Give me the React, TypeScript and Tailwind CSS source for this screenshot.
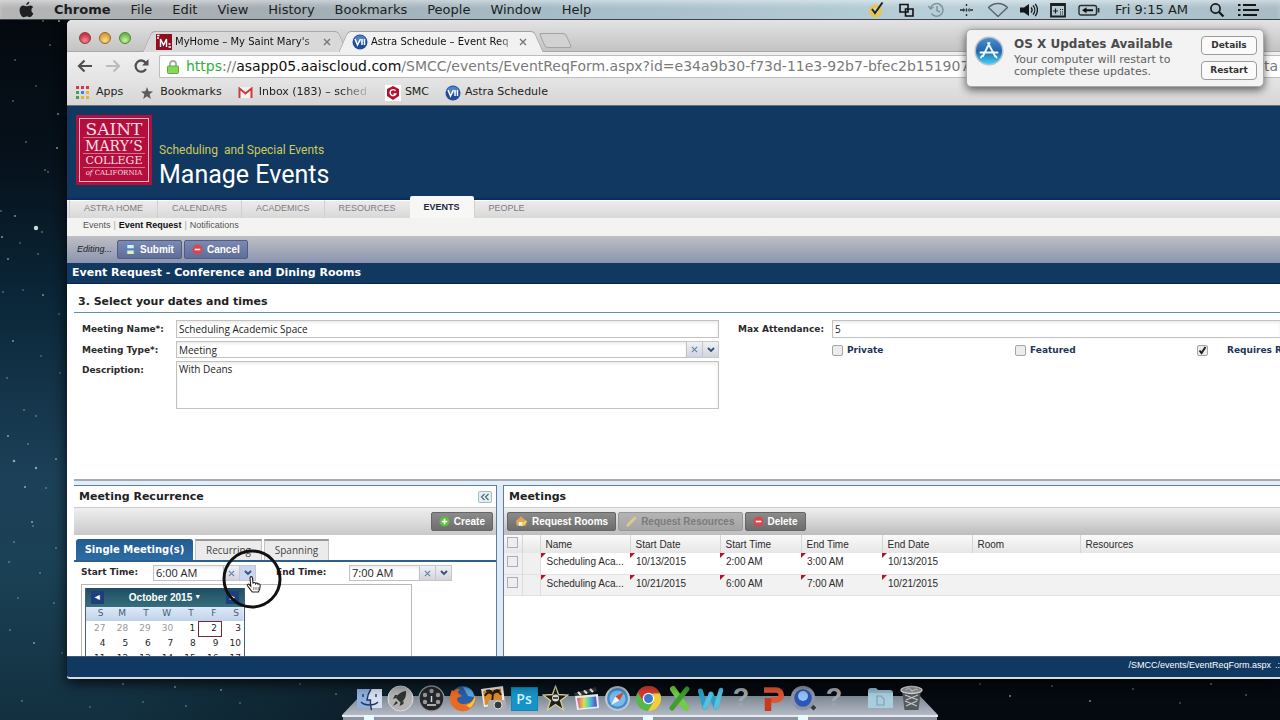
import React from "react";

const MENUS = ["File", "Edit", "View", "History", "Bookmarks", "People", "Window", "Help"];

const STARS: [number, number, number][] = [
  [43, 21, 0.8], [59, 21, 1.1], [50, 45, 0.8], [15, 60, 0.8], [36, 86, 0.7], [13, 101, 0.8], [58, 114, 0.9], [57, 148, 1],
  [26, 142, 0.8], [45, 170, 0.8], [48, 172, 0.8], [36, 228, 2.2], [1, 211, 0.8], [15, 216, 0.9], [42, 232, 0.8],
  [2, 237, 1], [20, 243, 0.7], [38, 254, 0.8], [8, 259, 0.9], [23, 290, 0.7], [3, 292, 0.8], [43, 295, 0.9],
  [59, 314, 0.7], [13, 341, 0.9], [41, 356, 0.7], [7, 378, 0.8], [60, 373, 0.7], [24, 410, 0.8], [36, 416, 0.8],
  [8, 436, 1], [28, 444, 0.8], [56, 459, 0.9], [14, 461, 1.3], [36, 468, 1.2], [25, 487, 1.1], [46, 488, 0.8],
  [32, 522, 1], [33, 526, 0.8], [14, 542, 0.8], [56, 548, 0.8], [9, 562, 0.8], [40, 573, 0.8], [18, 598, 0.7],
  [54, 603, 0.8], [10, 630, 0.8], [34, 643, 0.9], [62, 653, 0.7], [123, 684, 0.9], [175, 687, 0.9], [221, 690, 0.9],
  [143, 702, 0.7], [186, 706, 0.8], [22, 701, 0.8], [90, 707, 0.7], [240, 703, 0.7], [300, 684, 0.8], [336, 694, 0.8],
  [980, 684, 0.8], [1010, 696, 0.9], [1052, 686, 0.8], [1090, 701, 0.9], [1133, 689, 0.8], [1180, 703, 0.7],
  [1211, 684, 0.9], [1246, 695, 0.8],
];

function Sky() {
  return (
    <svg aria-hidden="true" className="absolute inset-0 h-full w-full">
      {STARS.map(([x, y, r]) => (
        <circle key={`${x}-${y}`} cx={x} cy={y} r={r} fill="#c9dbe2" opacity={r > 2 ? 1 : 0.65} />
      ))}
    </svg>
  );
}

function AppleIcon() {
  return (
    <svg viewBox="0 0 16 18" className="h-[17px] w-[15px]" fill="#1d1f20">
      <path d="M11 0.6c.1 1.9-1.5 3.6-3.3 3.6C7.400 2.500 9.200.7 11 .6zM15.300 13.100c-.8 2.100-2.200 4.200-3.800 4.200-1.200 0-1.600-.7-3.100-.7-1.500 0-2 .7-3.100.7C3 17.300.6 13.300.6 9.700c0-3.200 2-5 4.100-5 1.400 0 2.500.9 3.500.9.9 0 2.200-1 4-1 1 .1 2.200.5 3 1.700-2.900 1.800-2.400 5.600.1 6.800z" />
    </svg>
  );
}

function MenuBar() {
  return (
    <header className="relative z-20 flex h-5 shrink-0 items-center justify-between border-b border-[#3d444a] bg-[linear-gradient(90deg,#b5b5b5,#a3adb3_22%,#a6bdc9_45%,#b8d0da_75%,#a9bcc6)] pr-[21px] pl-[19px] font-['DejaVu_Sans',sans-serif] text-[13px] text-[#1c1e20] shadow-[inset_0_5px_6px_-2px_rgba(255,255,255,0.5)]">
      <nav className="flex items-center gap-5">
        <AppleIcon />
        <b>Chrome</b>
        {MENUS.map((m) => (
          <span key={m}>{m}</span>
        ))}
      </nav>
      <div className="flex items-center gap-[11px]">
        <svg viewBox="0 0 18 18" className="h-[18px] w-[19px]">
          <circle cx="8" cy="10" r="6.500" fill="#e8c54b" />
          <circle cx="8" cy="10" r="3" fill="#cfd4c0" />
          <path d="M4.500 8l3 4L15 1.500" fill="none" stroke="#222" strokeWidth="2" />
        </svg>
        <svg viewBox="0 0 18 18" className="h-[18px] w-[19px]" fill="none" stroke="#111" strokeWidth="1.600">
          <path d="M2.500 3.500h8v7.500h-8zM8 8h7.500v7H8z" />
        </svg>
        <svg viewBox="0 0 18 18" className="h-[18px] w-[19px]" fill="none" stroke="#84939c" strokeWidth="1.500">
          <path d="M3.200 7A6.300 6.300 0 1 1 4 12.500M1 5l2.200 3L6 6M9.500 5v4.500l3 1.500" />
        </svg>
        <svg viewBox="0 0 18 18" className="h-[18px] w-[19px]" fill="#27292b">
          <path d="M8.300 7.500h1.400v3H8.300zM8.300 3h1.400v2H8.300zM8.300 13h1.400v2H8.300zM2.500 8.300h4v1.400h-4zM11.500 8.300h4v1.400h-4zM6 6.500L7.500 9 6 11.500zM12 6.500L10.500 9l1.500 2.500z" />
        </svg>
        <svg viewBox="0 0 22 18" className="h-[18px] w-[22px]" fill="none" stroke="#59656c" strokeWidth="1.400">
          <path d="M1.500 6.500C7 1.200 15 1.200 20.500 6.500L11 15.500z" strokeLinejoin="round" />
        </svg>
        <svg viewBox="0 0 18 18" className="h-[18px] w-[18px]" fill="#151617">
          <path d="M0 6.500h4L9 3v12l-5-3.500H0z" />
          <path d="M11 6.500c1.300 1.500 1.300 3.500 0 5M13 4.500c2.400 2.600 2.400 6.400 0 9M15.200 2.800c3 3.500 3 8.900 0 12.400" fill="none" stroke="#151617" strokeWidth="1.300" />
        </svg>
        <svg viewBox="0 0 18 18" className="h-[18px] w-[18px]">
          <path d="M2 3h14v12.500H2z" fill="none" stroke="#1c1e20" strokeWidth="1.800" />
          <path d="M2 3h14v2H2z" fill="#1c1e20" />
          <path d="M4 10h5M6.500 7.500v5M11 8.500h1M13 8.500h1M11 11h1M13 11h1M11 13h1M13 13h1" stroke="#1c1e20" strokeWidth="1.200" />
        </svg>
        <svg viewBox="0 0 22 18" className="h-[18px] w-[22px]">
          <rect x="1" y="4.500" width="17.500" height="9.500" rx="2" fill="none" stroke="#2b2e30" strokeWidth="1.400" />
          <path d="M20.500 7v4.500" stroke="#2b2e30" strokeWidth="1.800" />
          <path d="M4 9.300l4.500-3v2H15v2H8.500v2z" fill="#111" />
        </svg>
        <span className="mr-[5px] ml-1 whitespace-nowrap">Fri 9:15 AM</span>
        <svg viewBox="0 0 18 18" className="ml-1 h-[18px] w-[18px]" fill="none" stroke="#17191a">
          <circle cx="7.500" cy="7.500" r="4.600" strokeWidth="1.700" />
          <path d="M11 11l4.500 4.500" strokeWidth="2.300" />
        </svg>
        <svg viewBox="0 0 22 18" className="h-[18px] w-[22px]" stroke="#151617" strokeWidth="2.200">
          <path d="M1 4h2.500M1 9h2.500M1 14h2.500M6 4h13M6 9h16M6 14h14" />
        </svg>
      </div>
    </header>
  );
}

function Notification() {
  return (
    <aside className="absolute top-[29px] right-4 z-30 flex gap-[10px] rounded-[5px] border border-[#a9a9a9] bg-[#f3f3f3] py-[6px] pr-[6px] pl-[7px] font-['DejaVu_Sans',sans-serif] shadow-[0_3px_9px_rgba(0,0,0,0.6)]">
      <svg viewBox="0 0 30 30" className="h-[30px] w-[30px]">
        <defs>
          <linearGradient id="store" x1="0" x2="0" y1="0" y2="1">
            <stop offset="0" stopColor="#4d8fd0" />
            <stop offset="0.5" stopColor="#2265ad" />
            <stop offset="1" stopColor="#3fd0f5" />
          </linearGradient>
        </defs>
        <circle cx="15" cy="15" r="14.500" fill="#b9c0c6" />
        <circle cx="15" cy="15" r="13" fill="url(#store)" />
        <path d="M15.500 7L9 20M14 7l7 13M6.500 16.500h17M8 20l-1 1.500M21.500 20l1 1.500" stroke="#eef6fb" strokeWidth="1.900" strokeLinecap="round" />
      </svg>
      <div className="w-[177px] text-[11px] leading-[12px] text-[#5f5f5f]">
        <b className="mt-[1px] mb-[3px] block text-[12px] leading-[14px] whitespace-nowrap text-[#4b4b4b]">OS X Updates Available</b>
        <p>
          Your computer will restart to
          <br />
          complete these updates.
        </p>
      </div>
      <div className="flex flex-col gap-[6px] text-[9px] font-bold text-[#333]">
        <button className="h-[19px] w-[56px] rounded-[4px] border border-[#9b9b9b] bg-[#fafafa]">Details</button>
        <button className="h-[19px] w-[56px] rounded-[4px] border border-[#9b9b9b] bg-[#fafafa]">Restart</button>
      </div>
    </aside>
  );
}

function AstraIcon() {
  return (
    <svg viewBox="0 0 16 16" className="h-4 w-4 shrink-0">
      <circle cx="8" cy="8" r="7.500" fill="#1f4f9c" />
      <ellipse cx="8" cy="5" rx="5.500" ry="3.500" fill="#6fa3dc" opacity="0.6" />
      <path d="M3 5l2.500 6L8.500 5M10 5v6M12.500 5v6" fill="none" stroke="#fff" strokeWidth="1.500" />
    </svg>
  );
}

function Tab({ title, icon, active }: { title: string; icon: React.ReactNode; active?: boolean }) {
  const face = active ? "bg-[#f1f1f1] border-[#a2a2a2]" : "bg-[#d9d9d9] border-[#a9a9a9]";
  return (
    <div className={`relative flex h-[21px] w-[196px] items-center gap-[3px] pr-3 pl-[9px] ${active ? "z-10" : ""}`}>
      <span className={`absolute inset-y-0 left-0 w-1/2 -skew-x-[24deg] rounded-tl-[4px] border-t border-l ${face}`} />
      <span className={`absolute inset-y-0 right-0 w-1/2 skew-x-[24deg] rounded-tr-[4px] border-t border-r ${face}`} />
      <span className={`absolute inset-x-6 inset-y-0 border-t ${face}`} />
      <span className="relative">{icon}</span>
      <span className="relative flex-1 overflow-hidden text-[10px] whitespace-nowrap text-[#111] [mask-image:linear-gradient(90deg,#000_88%,transparent)]">{title}</span>
      <button aria-label="Close tab" className="relative">
        <svg viewBox="0 0 8 8" className="h-[8px] w-[8px]" stroke="#777" strokeWidth="1.400">
          <path d="M1 1l6 6M7 1L1 7" />
        </svg>
      </button>
    </div>
  );
}

function BrowserChrome() {
  return (
    <div className="font-['DejaVu_Sans',sans-serif]">
      <div className="flex h-8 items-end bg-gradient-to-b from-[#e3e3e3] to-[#c2c2c2] pl-3 shadow-[inset_0_-1px_0_#a8a8a8]">
        <div className="flex h-full items-center gap-2 pt-1">
          <i className="h-3 w-3 rounded-full border border-[#8c3a40] bg-[radial-gradient(circle_at_50%_75%,#f08a92,#cf2f42_70%)]" />
          <i className="h-3 w-3 rounded-full border border-[#8f6a2c] bg-[radial-gradient(circle_at_50%_75%,#f8dd92,#dc9c34_70%)]" />
          <i className="h-3 w-3 rounded-full border border-[#4f8438] bg-[radial-gradient(circle_at_50%_75%,#c9f2a4,#6cb843_70%)]" />
        </div>
        <div className="ml-4 flex">
          <Tab
            title="MyHome – My Saint Mary's"
            icon={
              <svg viewBox="0 0 16 16" className="h-4 w-4">
                <path d="M0 0h16v16H0z" fill="#8e1020" />
                <path d="M4.500 13V5l3 6 3-6v8M1 1.500h2.500M1 4h2M12.500 10h2M12.500 13h2.500" fill="none" stroke="#fff" strokeWidth="1.400" />
              </svg>
            }
          />
          <Tab title="Astra Schedule – Event Req" icon={<AstraIcon />} active />
        </div>
        <button aria-label="New tab" className="mb-[4px] ml-[3px] h-[15px] w-[27px] skew-x-[24deg] rounded-[3px] border border-[#a3a3a3] bg-[#d2d2d2]" />
      </div>

      <div className="flex h-7 items-center bg-gradient-to-b from-[#f0f0f0] to-[#e4e4e4] pl-[10px]">
        <div className="flex items-center gap-3 text-[#555]">
          <button aria-label="Back">
            <svg viewBox="0 0 16 14" className="h-[14px] w-4" fill="none" stroke="#505050" strokeWidth="2.200">
              <path d="M15 7H2M7.500 1.500L2 7l5.500 5.500" />
            </svg>
          </button>
          <button aria-label="Forward">
            <svg viewBox="0 0 16 14" className="h-[14px] w-4" fill="none" stroke="#bcbcbc" strokeWidth="2.200">
              <path d="M1 7h13M8.500 1.500L14 7l-5.500 5.500" />
            </svg>
          </button>
          <button aria-label="Reload">
            <svg viewBox="0 0 16 16" className="h-4 w-4">
              <path d="M13 11A5.600 5.600 0 1 1 12.500 4.500" fill="none" stroke="#505050" strokeWidth="2.300" />
              <path d="M15.500 1v6.500H9z" fill="#505050" />
            </svg>
          </button>
        </div>
        <div className="mt-px ml-[10px] flex h-[23px] min-w-0 flex-1 items-center overflow-hidden rounded-l-[2px] border border-r-0 border-[#bdbdbd] bg-white pl-[7px] text-[14px] whitespace-nowrap text-[#7a7a7a]">
          <svg viewBox="0 0 12 14" className="mr-[7px] h-[14px] w-3 shrink-0">
            <path d="M3 7V4a3 3 0 0 1 6 0v3" fill="none" stroke="#a5aaa2" strokeWidth="1.800" />
            <rect x="0.500" y="6" width="11" height="7.500" rx="1" fill="#86d65c" stroke="#5cab38" />
          </svg>
          <span>
            <span className="text-[#2eb13c]">https</span>://<span className="text-[#111]">asapp05.aaiscloud.com</span>
            /SMCC/events/EventReqForm.aspx?id=e34a9b30-f73d-11e3-92b7-bfec2b151907
          </span>
          <span className="ml-auto pr-[2px]">ta</span>
        </div>
      </div>

      <div className="flex h-[26px] items-center border-b border-[#6e6e6e] bg-gradient-to-b from-[#e4e4e4] to-[#d6d6d6] pl-[9px] text-[11px] text-[#222]">
        <a href="#apps" className="flex items-center gap-[7px]">
          <svg viewBox="0 0 13 13" className="h-[13px] w-[13px]">
            <path d="M0 0h3v3H0zM5 0h3v3H5zM10 0h3v3h-3z" fill="#d9344a" />
            <path d="M0 5h3v3H0z" fill="#3da35a" />
            <path d="M5 5h3v3H5z" fill="#3f7fe0" />
            <path d="M10 5h3v3h-3zM10 10h3v3h-3zM5 10h3v3H5z" fill="#e8b13a" />
            <path d="M0 10h3v3H0z" fill="#3da35a" />
          </svg>
          Apps
        </a>
        <a href="#bookmarks" className="ml-[18px] flex items-center gap-[7px]">
          <svg viewBox="0 0 12 12" className="h-3 w-3" fill="#5c5c5c">
            <path d="M6 0l1.600 4.200L12 4.500 8.600 7.300 9.800 12 6 9.300 2.200 12l1.200-4.700L0 4.500l4.400-.3z" />
          </svg>
          Bookmarks
        </a>
        <a href="#inbox" className="ml-4 flex items-center gap-[6px] whitespace-nowrap">
          <svg viewBox="0 0 15 11" className="h-[11px] w-[15px] shrink-0">
            <path d="M1 0h13v11H1z" fill="#f2f2f2" />
            <path d="M1.500 11V1.500l6 5 6-5V11" fill="none" stroke="#cf3b3b" strokeWidth="2" />
          </svg>
          <span className="[mask-image:linear-gradient(90deg,#000_75%,rgba(0,0,0,0.2))]">Inbox (183) – sched</span>
        </a>
        <a href="#smc" className="ml-[18px] flex items-center gap-1">
          <svg viewBox="0 0 16 16" className="h-4 w-4">
            <path d="M0 0h16v16H0z" fill="#fff" />
            <path d="M8 1l6 3v7l-6 4-6-4V4z" fill="#b5122f" />
            <path d="M10.500 5.800A3 3 0 1 0 10.800 9H8.500" fill="none" stroke="#fff" strokeWidth="1.400" />
          </svg>
          SMC
        </a>
        <a href="#astra" className="ml-4 flex items-center gap-1">
          <AstraIcon />
          Astra Schedule
        </a>
      </div>
    </div>
  );
}

function Banner() {
  return (
    <div className="flex h-[94px] items-start gap-[7px] bg-[#103861] pt-[9px] pl-[9px] shadow-[inset_0_-3px_2px_-1px_#0a2c66]">
      <div className="bg-[#b40f3c] p-[3px]">
        <div className="flex h-[64px] w-[70px] flex-col items-center justify-between border border-[#f0b8c6] px-[3px] pt-[3px] pb-[3px] font-['DejaVu_Serif',serif] text-[#fbdfe6]">
          <span className="w-full border-b border-[#d9708a] text-center text-[17px] leading-[15px]">SAINT</span>
          <span className="w-full border-b border-[#d9708a] text-center text-[14px] leading-[14px]">MARY’S</span>
          <span className="w-full border-b border-[#d9708a] text-center text-[11px] leading-[13px]">COLLEGE</span>
          <span className="text-[7px] leading-[9px] whitespace-nowrap">
            <i>of</i> CALIFORNIA
          </span>
        </div>
      </div>
      <div className="pt-[27px] font-['Roboto',sans-serif]">
        <p className="text-[12px] leading-4 whitespace-pre text-[#cfca5a]">Scheduling  and Special Events</p>
        <h1 className="text-[25px] leading-[33px] text-white">Manage Events</h1>
      </div>
    </div>
  );
}

const NAV = ["ASTRA HOME", "CALENDARS", "ACADEMICS", "RESOURCES", "EVENTS", "PEOPLE"];

function SiteNav() {
  return (
    <div className="font-['Liberation_Sans',sans-serif] text-[9px] text-[#7d7d7d]">
      <nav className="flex h-[18px] items-end border-t border-white bg-gradient-to-b from-[#eeeaea] to-[#d9d9d9] pl-[2px]">
        {NAV.map((n) =>
          n === "EVENTS" ? (
            <a key={n} href="#events" className="relative z-10 flex h-[22px] items-center rounded-t-[2px] bg-[#f7f7f6] px-[14px] pt-[2px] font-bold text-[#1d2a3a]">
              {n}
            </a>
          ) : (
            <a key={n} href="#nav" className="flex h-[18px] items-center border-l border-[#d0d0d0] px-[14px]">
              {n}
            </a>
          ),
        )}
      </nav>
      <div className="flex h-[18px] items-center gap-[3px] bg-[#f3f3f1] pb-[2px] pl-4 text-[#555]">
        <a href="#list">Events</a>
        <span className="text-[#aaa]">|</span>
        <a href="#request" className="font-bold text-[#111]">Event Request</a>
        <span className="text-[#aaa]">|</span>
        <a href="#notifications">Notifications</a>
      </div>
    </div>
  );
}

function MinusIcon() {
  return (
    <svg viewBox="0 0 12 12" className="h-[11px] w-[11px]">
      <circle cx="6" cy="6" r="5.500" fill="#d9464f" />
      <path d="M3 6h6" stroke="#fff" strokeWidth="1.800" />
    </svg>
  );
}

function ToolButton({ icon, label, tone }: { icon: React.ReactNode; label: string; tone: "blue" | "grey" | "off" }) {
  const look = {
    blue: "border-[#515c85] bg-gradient-to-b from-[#7c89b0] to-[#5f6d9a] text-white",
    grey: "border-[#666] bg-gradient-to-b from-[#8b8b8b] to-[#6d6d6d] text-white",
    off: "border-[#989898] bg-gradient-to-b from-[#b4b4b4] to-[#a4a4a4] text-[#7b7b7b]",
  }[tone];
  return (
    <button disabled={tone === "off"} className={`flex h-[19px] items-center gap-1 rounded-[2px] border px-[7px] font-['Liberation_Sans',sans-serif] text-[10px] font-bold whitespace-nowrap ${look}`}>
      {icon}
      {label}
    </button>
  );
}

function ComboButtons({ hot }: { hot?: boolean }) {
  return (
    <>
      <button aria-label="Clear" className="flex w-4 items-center justify-center border border-l-0 border-[#c6c6ce] bg-gradient-to-b from-[#f0f1f4] to-[#d2d4dc]">
        <svg viewBox="0 0 8 8" className="h-[7px] w-[7px]" stroke="#5c83ad" strokeWidth="1.300">
          <path d="M1 1l6 6M7 1L1 7" />
        </svg>
      </button>
      <button aria-label="Open list" className={`flex w-4 items-center justify-center border border-l-0 border-[#c6c6ce] ${hot ? "bg-[#c9d6ee]" : "bg-gradient-to-b from-[#f0f1f4] to-[#d2d4dc]"}`}>
        <svg viewBox="0 0 8 6" className="h-[6px] w-2" fill="none" stroke="#36507c" strokeWidth="1.800">
          <path d="M1 1l3 3 3-3" />
        </svg>
      </button>
    </>
  );
}

const FIELD = "border border-[#c2c2c2] bg-white px-[2px] font-['Open_Sans',sans-serif] font-normal text-[#222] shadow-[inset_0_2px_3px_rgba(0,0,0,0.08)] outline-none";
const LABEL = "w-[94px] shrink-0 pt-[3px] text-[9px] leading-3 font-bold whitespace-nowrap text-[#2a2a2a]";

function RequestForm() {
  return (
    <form className="grid grid-cols-[656fr_542fr] pt-[7px] pl-2 text-[10px]">
      <div className="space-y-[3px] pr-[19px]">
        <div className="flex">
          <label htmlFor="name" className={LABEL}>Meeting Name*:</label>
          <input id="name" defaultValue="Scheduling Academic Space" className={`h-[18px] min-w-0 flex-1 ${FIELD}`} />
        </div>
        <div className="flex">
          <label htmlFor="type" className={LABEL}>Meeting Type*:</label>
          <input id="type" defaultValue="Meeting" className={`h-[17px] min-w-0 flex-1 ${FIELD}`} />
          <ComboButtons />
        </div>
        <div className="flex">
          <label htmlFor="desc" className={LABEL}>Description:</label>
          <textarea id="desc" defaultValue="With Deans" className={`h-[48px] min-w-0 flex-1 resize-none ${FIELD}`} />
        </div>
      </div>
      <div className="space-y-[6px]">
        <div className="flex">
          <label htmlFor="max" className={LABEL}>Max Attendance:</label>
          <input id="max" defaultValue="5" className={`h-[18px] min-w-0 flex-1 border-r-0 ${FIELD}`} />
        </div>
        <div className="grid grid-cols-[183fr_182fr_83fr] pl-[94px] text-[9px] font-bold text-[#20355a]">
          <label className="flex items-center gap-1">
            <input type="checkbox" className="h-[11px] w-[11px] appearance-none rounded-[2px] border border-[#a5a5a5] bg-[#ececec]" />
            Private
          </label>
          <label className="flex items-center gap-1">
            <input type="checkbox" className="h-[11px] w-[11px] appearance-none rounded-[2px] border border-[#a5a5a5] bg-[#ececec]" />
            Featured
          </label>
          <label className="flex items-center gap-[19px] overflow-hidden whitespace-nowrap">
            <span className="relative flex">
              <input type="checkbox" defaultChecked className="h-[11px] w-[11px] appearance-none rounded-[2px] border border-[#a5a5a5] bg-[#ececec]" />
              <svg viewBox="0 0 11 11" className="pointer-events-none absolute inset-0" fill="none" stroke="#222" strokeWidth="2">
                <path d="M2.500 5.500l2 2.500L8.500 2" />
              </svg>
            </span>
            Requires Rooms
          </label>
        </div>
      </div>
    </form>
  );
}

const WEEKS = [
  [27, 28, 29, 30, 1, 2, 3],
  [4, 5, 6, 7, 8, 9, 10],
  [11, 12, 13, 14, 15, 16, 17],
];

function Calendar() {
  return (
    <div className="w-[160px] border-x border-[#44607a]">
      <div className="flex h-[19px] items-center justify-between bg-gradient-to-b from-[#1f4c63] to-[#356f7c] px-[5px] font-['Liberation_Sans',sans-serif] text-[10px] font-bold text-white">
        <button aria-label="Previous month" className="flex h-[13px] w-[13px] items-center justify-center bg-[#1d3f7c] text-[6px]">◀</button>
        <button className="flex items-center gap-[2px]">
          October 2015<span className="text-[7px]">▼</span>
        </button>
        <button aria-label="Next month" className="flex h-[13px] w-[13px] items-center justify-center bg-[#1d3f7c] text-[6px]">▶</button>
      </div>
      <table className="w-full table-fixed border-collapse font-['DejaVu_Sans',sans-serif] text-[9px] text-[#1f1f1f]">
        <thead className="bg-gradient-to-b from-[#dfe9f7] to-[#bfd2ea] text-[#4a5c77]">
          <tr>
            {"SMTWTFS".split("").map((d, i) => (
              <th key={i} className="h-[14px] p-0 pr-[5px] text-right font-normal">{d}</th>
            ))}
          </tr>
        </thead>
        <tbody>
          {WEEKS.map((w, r) => (
            <tr key={r}>
              {w.map((d) => {
                const other = r === 0 && d > 20;
                const today = r === 0 && d === 2;
                return (
                  <td key={d} className={`h-[15px] p-0 text-right leading-[13px] ${other ? "text-[#9a9a9a]" : ""} ${today ? "border border-[#7c2430] pr-1" : "pr-[3px]"}`}>
                    {d}
                  </td>
                );
              })}
            </tr>
          ))}
        </tbody>
      </table>
    </div>
  );
}

function PointerRing() {
  return (
    <span aria-hidden="true" className="pointer-events-none absolute -top-4 -right-[26px] z-20 h-[60px] w-[60px]">
      <svg viewBox="0 0 60 60" className="h-full w-full">
        <circle cx="30" cy="30" r="28" fill="none" stroke="#111" strokeWidth="3" />
        <path d="M28 29c0-1.800 2.300-1.800 2.500 0l.5 5.500c.5-1.400 2.400-1.200 2.600.2.600-1 2.300-.8 2.400.5.800-.7 2.200-.2 2.200 1.200 0 3-.6 4.600-1.800 6.600h-6.200c-1.500-2-3.200-4.200-4.700-6.200-.7-1.200.8-2.300 1.800-1.300l1.500 1.600z" fill="#fff" stroke="#222" strokeWidth="1.100" />
        <path d="M31.800 38v3M34 38v3M36.200 38v3" stroke="#333" strokeWidth="0.700" />
      </svg>
    </span>
  );
}

function RecurrencePanel() {
  return (
    <section className="flex min-h-0 min-w-0 flex-col border-t border-r border-[#5b7f9f] bg-white">
      <div className="flex h-[21px] shrink-0 items-center justify-between pt-px pr-1 pl-[5px]">
        <h3 className="text-[11px] font-bold text-[#222]">Meeting Recurrence</h3>
        <button aria-label="Collapse panel" className="flex h-3 w-[14px] items-center justify-center rounded-[2px] border border-[#9fbcc8] bg-[#e4eff2]">
          <svg viewBox="0 0 10 8" className="h-2 w-[10px]" fill="none" stroke="#46697a" strokeWidth="1.200">
            <path d="M4.500 1l-3 3 3 3M8.500 1l-3 3 3 3" />
          </svg>
        </button>
      </div>
      <div className="flex h-[28px] shrink-0 items-center justify-end border-t border-[#ccc] bg-gradient-to-b from-[#efefef] to-[#c9c9c9] pr-[3px]">
        <ToolButton
          tone="grey"
          label="Create"
          icon={
            <svg viewBox="0 0 12 12" className="h-[11px] w-[11px]">
              <circle cx="6" cy="6" r="5.500" fill="#5fbf45" />
              <path d="M3 6h6M6 3v6" stroke="#fff" strokeWidth="1.800" />
            </svg>
          }
        />
      </div>
      <div className="flex shrink-0 items-end gap-[2px] border-b-2 border-[#2d5f8c] pt-[4px] pl-[2px] text-[10px] text-[#444]" role="tablist">
        <button role="tab" className="h-[21px] w-[117px] rounded-t-[3px] bg-gradient-to-b from-[#245a92] to-[#2c6ca3] font-bold text-white">Single Meeting(s)</button>
        <button role="tab" className="h-[21px] w-[67px] border border-t-2 border-b-0 border-[#c4c4c4] border-t-[#999] bg-[#ebebeb] font-['Open_Sans',sans-serif]">Recurring</button>
        <button role="tab" className="h-[21px] w-[65px] border border-t-2 border-b-0 border-[#c4c4c4] border-t-[#999] bg-[#ebebeb] font-['Open_Sans',sans-serif]">Spanning</button>
      </div>
      <div className="flex h-[22px] shrink-0 pt-[3px] pl-[7px] text-[9px] font-bold text-[#2a2a2a]">
        <label htmlFor="start" className="w-[72px] pt-px">Start Time:</label>
        <div className="relative flex h-4 text-[11px]">
          <input id="start" defaultValue="6:00 AM" className={`w-[71px] ${FIELD}`} />
          <ComboButtons hot />
          <PointerRing />
        </div>
        <label htmlFor="end" className="ml-5 w-[73px] pt-px">End Time:</label>
        <div className="flex h-4 text-[11px]">
          <input id="end" defaultValue="7:00 AM" className={`w-[71px] ${FIELD}`} />
          <ComboButtons />
        </div>
      </div>
      <div className="ml-[7px] min-h-0 w-[331px] flex-1 overflow-hidden border border-b-0 border-[#b9b9b9] pt-[3px] pl-[3px]">
        <Calendar />
      </div>
    </section>
  );
}

const COLUMNS = ["Name", "Start Date", "Start Time", "End Time", "End Date", "Room", "Resources"];
const ROWS = [
  ["Scheduling Aca...", "10/13/2015", "2:00 AM", "3:00 AM", "10/13/2015", "", ""],
  ["Scheduling Aca...", "10/21/2015", "6:00 AM", "7:00 AM", "10/21/2015", "", ""],
];

function MeetingsPanel() {
  return (
    <section className="min-h-0 min-w-0 border-t border-l border-[#5b7f9f] bg-white">
      <h3 className="flex h-[21px] items-center pt-px pl-[5px] text-[11px] font-bold text-[#222]">Meetings</h3>
      <div className="flex h-[28px] items-center gap-[2px] border-t border-[#ccc] bg-gradient-to-b from-[#efefef] to-[#bdbdbd] pb-px pl-[3px]">
        <ToolButton
          tone="grey"
          label="Request Rooms"
          icon={
            <svg viewBox="0 0 14 12" className="h-3 w-[13px]">
              <path d="M1 6l5.500-5L12 6v5H2z" fill="#e6a253" />
              <path d="M4 7h4v4H4z" fill="#fff" />
              <path d="M7 11l5.500-5" stroke="#e9d75c" strokeWidth="2.200" />
            </svg>
          }
        />
        <ToolButton
          tone="off"
          label="Request Resources"
          icon={
            <svg viewBox="0 0 12 12" className="h-[11px] w-[11px]">
              <path d="M2 10l7.500-7.500" stroke="#dccb82" strokeWidth="3.200" strokeLinecap="round" />
            </svg>
          }
        />
        <ToolButton tone="grey" label="Delete" icon={<MinusIcon />} />
      </div>
      <table className="w-full table-fixed border-collapse font-['Liberation_Sans',sans-serif] text-[10px] text-[#2b2b2b]">
        <colgroup>
          <col className="w-[18px]" />
          <col className="w-[18px]" />
          <col className="w-[90px]" />
          <col className="w-[90px]" />
          <col className="w-[81px]" />
          <col className="w-[81px]" />
          <col className="w-[90px]" />
          <col className="w-[108px]" />
          <col />
        </colgroup>
        <thead className="bg-gradient-to-b from-[#fafafa] to-[#e6e6e6]">
          <tr>
            <th className="h-[18px] p-0">
              <input type="checkbox" aria-label="Select all" className="mx-auto mb-1 block h-[11px] w-[11px] appearance-none border border-[#a9aeb8] bg-[#eceef1]" />
            </th>
            <th className="border-l border-[#d5d5d5] p-0" />
            {COLUMNS.map((c) => (
              <th key={c} className="border-l border-[#d5d5d5] p-0 pl-[5px] text-left font-normal">{c}</th>
            ))}
          </tr>
        </thead>
        <tbody>
          {ROWS.map((row, r) => (
            <tr key={r} className={`border-b border-[#e2e2e2] ${r ? "bg-[#f2f2f2]" : ""}`}>
              <td className="h-[21px] bg-[#f0f0f0] p-0">
                <input type="checkbox" aria-label="Select meeting" className="mx-auto mb-1 block h-[11px] w-[11px] appearance-none border border-[#a9aeb8] bg-[#eceef1]" />
              </td>
              <td className="border-x border-[#dcdcdc] bg-[#f0f0f0] p-0" />
              {row.map((v, i) => (
                <td key={i} className="relative p-0 pb-[3px] pl-[6px] whitespace-nowrap">
                  {v && <span className="absolute top-0 left-0 border-t-[5px] border-r-[5px] border-t-[#b3112c] border-r-transparent" />}
                  {v}
                </td>
              ))}
            </tr>
          ))}
        </tbody>
      </table>
    </section>
  );
}

function BrowserWindow() {
  return (
    <main className="relative z-10 ml-[67px] flex min-h-0 flex-1 flex-col overflow-hidden rounded-tl-[5px] rounded-bl-[3px] border-b-2 border-[#d6dbe2] bg-white font-['DejaVu_Sans',sans-serif] shadow-[0_4px_14px_rgba(0,0,0,0.8)]">
      <BrowserChrome />
      <Banner />
      <SiteNav />
      <div className="flex h-[27px] shrink-0 items-center gap-[2px] bg-gradient-to-b from-[#bfc0c4] to-[#8b94b0] pl-[10px]">
        <i className="mr-[3px] font-['Liberation_Sans',sans-serif] text-[9px] text-[#222]">Editing...</i>
        <ToolButton
          tone="blue"
          label="Submit"
          icon={
            <svg viewBox="0 0 12 12" className="h-[11px] w-[11px]">
              <path d="M1 1h10v10H1z" fill="#4a86cf" />
              <path d="M2.500 1h7v3.500h-7z" fill="#dcecf8" />
              <path d="M2.500 7h7v4h-7z" fill="#e6efb0" />
            </svg>
          }
        />
        <ToolButton tone="blue" label="Cancel" icon={<MinusIcon />} />
      </div>
      <h2 className="flex h-[21px] shrink-0 items-center border-b border-[#0a2650] bg-[#103861] pt-px pl-[5px] text-[11px] font-bold text-white">Event Request - Conference and Dining Rooms</h2>
      <div className="flex min-h-0 flex-1 flex-col pl-[7px]">
        <h3 className="flex h-[29px] shrink-0 items-end border-b border-[#5f92b4] pb-[2px] pl-1 text-[11px] font-bold text-[#222]">3. Select your dates and times</h3>
        <RequestForm />
        <div className="mt-auto h-[6px] shrink-0 border-t-2 border-[#a3adba] bg-[#e3eef6]" />
        <div className="grid h-[171px] shrink-0 grid-cols-[423fr_6px_777fr] bg-[#dfeaf5]">
          <RecurrencePanel />
          <div />
          <MeetingsPanel />
        </div>
      </div>
      <footer className="flex h-[21px] shrink-0 items-center justify-end gap-1 border-t border-[#3b5878] bg-[#103861] pb-[2px] font-['Liberation_Sans',sans-serif] text-[9px] text-white">
        /SMCC/events/EventReqForm.aspx <span>.:</span>
      </footer>
    </main>
  );
}

const ICON = "h-[27px] w-[27px] shrink-0";

function Dock() {
  const letter = "flex h-[27px] w-[27px] shrink-0 items-center justify-center font-['Liberation_Sans',sans-serif] text-[27px] leading-none font-bold";
  return (
    <footer className="relative flex h-[41px] shrink-0 items-start justify-center pt-[7px]">
      <svg aria-hidden="true" viewBox="0 0 596 24" preserveAspectRatio="none" className="absolute bottom-0 h-[24px] w-[596px]">
        <defs>
          <linearGradient id="shelf" x1="0" x2="0" y1="0" y2="1">
            <stop offset="0" stopColor="#7b8792" />
            <stop offset="1" stopColor="#b4bac6" />
          </linearGradient>
        </defs>
        <path d="M18 0h560l18 19H0z" fill="url(#shelf)" />
        <path d="M0 19h596v2H0z" fill="#e6e9ee" />
        <path d="M1 21h594v3H1z" fill="#8d95a2" />
        <path d="M22 19h10v5H22zM301 19h10v5H301zM456 19h10v5H456z" fill="#e9fbff" />
      </svg>
      <div className="relative mt-[-1px] flex items-center gap-1">
        <svg viewBox="0 0 27 27" className={ICON}>
          <path d="M1 4h25v19H1z" fill="#8fb0e0" />
          <path d="M15 4h11v19H14c0-4 0-6 .3-8H11c.5-4 2-8 4-11z" fill="#d5e1f2" />
          <path d="M15 4c-2 3-3.500 7-4 11h3.500c-.4 3 0 6 1 10M7 9v3M20 9v3M5 17c4 4 13 4 17 0" fill="none" stroke="#23355c" strokeWidth="1.400" />
        </svg>
        <svg viewBox="0 0 27 27" className={ICON}>
          <circle cx="13.500" cy="13.500" r="12.500" fill="#b3b3b3" stroke="#dedede" />
          <path d="M19 6c-5 .5-8 3-10 7l4.500 4.500c4-2 6-5.500 5.500-11.500zM9 13l-3 1 2-4h3zM13.500 17.500l-1 3.500 4-2v-3zM9 16l-3 5 5-3z" fill="#333" />
        </svg>
        <svg viewBox="0 0 27 27" className={ICON}>
          <circle cx="13.500" cy="13.500" r="12.500" fill="#25282c" stroke="#9b9b9b" strokeWidth="1.300" />
          {[[13.5, 6], [20, 10], [20, 17], [7, 17], [7, 10]].map(([x, y]) => (
            <circle key={`${x}${y}`} cx={x} cy={y} r="2.200" fill="#999" />
          ))}
          <path d="M13.500 11v6M9 20h9" stroke="#d8d8d8" strokeWidth="1.500" />
        </svg>
        <svg viewBox="0 0 27 27" className={ICON}>
          <circle cx="14" cy="12.500" r="11.500" fill="#275faa" />
          <path d="M14 2c6 0 11 4 11 10l-6-1z" fill="#5ca5e0" />
          <path d="M3 5c-3 6-3 12 1 17 5 5 13 6 18 1 5-4 5-9 4-13-1 5-5 9-11 9-4 0-7-2-7-6l5-2-4-3c0-2 1-3 2-4-3 0-4 0-6 2z" fill="#ea6a20" />
          <path d="M21 23c5-4 5.500-9 5-13-1 5-4 9-9 10z" fill="#f6c63a" />
        </svg>
        <svg viewBox="0 0 27 27" className={ICON}>
          <path d="M1 4l22-3 2 18-21 3z" fill="#f2efe8" />
          <path d="M3 6l18-2.500 1.500 14L5 20z" fill="#d98b25" />
          <path d="M13 8l-1 10M12 9c-3-3-6-1-7 2M13 9c3-4 7-2 8 1M12 8c-1-3-4-3-6-2M13 8c2-4 5-3 7-2" stroke="#2b1a0a" strokeWidth="1.900" fill="none" />
          <rect x="8" y="15" width="18" height="10" rx="2" fill="#a9acb0" />
          <circle cx="18" cy="20" r="4" fill="#333a42" stroke="#ddd" />
        </svg>
        <span className="flex h-[24px] w-[27px] shrink-0 items-center justify-center border border-[#1287b5] bg-[#1694c8] font-['Open_Sans',sans-serif] text-[14px] font-semibold text-[#d3f1fc]">Ps</span>
        <svg viewBox="0 0 27 27" className={ICON}>
          <path d="M13.500 1l3 8.500 9.500.5-7.500 5.500 3 9.500-8-5.500-8 5.500 3-9.500L1 10l9.500-.5z" fill="#1e1e1a" stroke="#d6cf96" strokeWidth="1.300" />
          <circle cx="13.500" cy="13" r="3.500" fill="#d9d9d0" />
          <path d="M11 13h5" stroke="#222" strokeWidth="1.500" />
        </svg>
        <svg viewBox="0 0 27 27" className={ICON}>
          <defs>
            <linearGradient id="clip">
              <stop offset="0" stopColor="#e04a98" />
              <stop offset="0.350" stopColor="#d9e04a" />
              <stop offset="0.650" stopColor="#3fc7d8" />
              <stop offset="1" stopColor="#5a3fc0" />
            </linearGradient>
          </defs>
          <path d="M1 8l22-6 1 4L2 12z" fill="#333" />
          <path d="M5 7l3 3M11 5.500l3 3M17 4l3 3" stroke="#e8e8e8" strokeWidth="2.200" />
          <path d="M2 11l23-2 1 14-22 2z" fill="#ececec" />
          <path d="M4 13l19-1.500 1 10-18 2z" fill="url(#clip)" />
        </svg>
        <svg viewBox="0 0 27 27" className={ICON}>
          <circle cx="13.500" cy="13.500" r="12.500" fill="#c2c7cb" />
          <circle cx="13.500" cy="13.500" r="10.500" fill="#3f8fd0" />
          <circle cx="13.500" cy="13.500" r="8" fill="#79bbe8" />
          <path d="M20 7l-4.500 8.500-4-4z" fill="#d84436" />
          <path d="M7 20l4.500-8.500 4 4z" fill="#f4f4f4" />
        </svg>
        <svg viewBox="0 0 27 27" className={ICON}>
          <circle cx="13.500" cy="13.500" r="12.500" fill="#57b848" />
          <path d="M2.700 7.300A12.500 12.500 0 0 1 25 8.500H13.500L8 16z" fill="#d93a30" />
          <path d="M25 8.500A12.500 12.500 0 0 1 13 26l6-9.500-1-8z" fill="#f4ce3a" />
          <circle cx="13.500" cy="13.500" r="5.800" fill="#fff" />
          <circle cx="13.500" cy="13.500" r="4.500" fill="#3f79cf" />
        </svg>
        <svg viewBox="0 0 27 27" className={ICON} fill="none" strokeLinecap="round">
          <path d="M7 4l13 19" stroke="#6fce45" strokeWidth="6" />
          <path d="M21 4L6 23" stroke="#3f9e2c" strokeWidth="5" />
        </svg>
        <svg viewBox="0 0 27 27" className={ICON} fill="none" strokeLinecap="round">
          <path d="M3.500 6L8 22M14 9l5 13" stroke="#2a9fc9" strokeWidth="5" />
          <path d="M14 9L8 22M24 5l-5 17" stroke="#54c1e0" strokeWidth="4.500" />
        </svg>
        <span className={`${letter} text-[#a0a7ac]`}>?</span>
        <svg viewBox="0 0 27 27" className={ICON} fill="none">
          <path d="M5 5h12c7 0 7 10 0 10h-5" stroke="#e2542f" strokeWidth="5.500" />
          <path d="M9 13v13" stroke="#c43b1d" strokeWidth="6.500" />
        </svg>
        <svg viewBox="0 0 27 27" className={ICON}>
          <path d="M17 17l8 7" stroke="#33383f" strokeWidth="4" />
          <circle cx="13" cy="13" r="10.500" fill="#2a57b8" stroke="#8f96a1" strokeWidth="3.500" />
          <circle cx="13" cy="11" r="5" fill="#94c0f5" />
        </svg>
        <span className={`${letter} text-[#a0a7ac]`}>?</span>
        <svg viewBox="0 0 27 27" className={`${ICON} ml-[15px]`}>
          <path d="M1 6c0-2 1-3 3-3h5l2 2h12c2 0 3 1 3 3v15H1z" fill="#8fb9cc" />
          <path d="M1 8h25v15H1z" fill="#a9cddc" />
          <path d="M10 11h4l3 3v6h-7z" fill="none" stroke="#7aa3b5" strokeWidth="1.200" />
        </svg>
        <svg viewBox="0 0 27 27" className={ICON}>
          <path d="M4 5h19l-2.500 20h-14z" fill="#54595d" />
          <ellipse cx="13.500" cy="5" rx="10.500" ry="3.500" fill="#8d9296" stroke="#d9dcde" strokeWidth="1.300" />
          <path d="M7 5l4-2 3 3 4-2 2 1M7 10l13 5M7 16l12 5M20 10L8 15M19 16L8 21" stroke="#c6c9cb" strokeWidth="1.200" fill="none" />
        </svg>
      </div>
    </footer>
  );
}

export default function App() {
  return (
    <div className="relative flex h-screen flex-col overflow-hidden bg-[linear-gradient(180deg,#04080d_0%,#06111b_22%,#0b2739_42%,#1c4058_66%,#1b4156_78%,#12303f_100%)]">
      <div className="absolute inset-x-0 bottom-0 h-[42px] bg-[linear-gradient(90deg,rgba(5,10,16,0)_8%,#050a10_55%)]" />
      <Sky />
      <MenuBar />
      <Notification />
      <BrowserWindow />
      <Dock />
    </div>
  );
}
